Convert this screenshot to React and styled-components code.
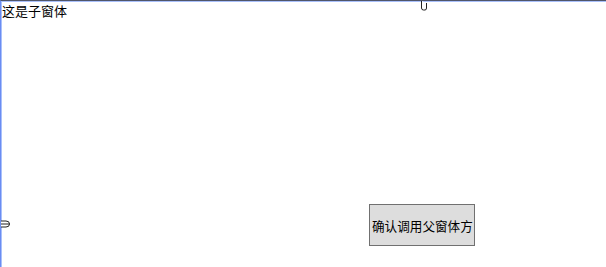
import React from "react";
import styled, { createGlobalStyle } from "styled-components";

const GlobalStyle = createGlobalStyle`
	html, body {
		margin: 0;
		padding: 0;
		background: #ffffff;
	}
	body {
		font-family: "Noto Sans CJK SC", "Liberation Sans", sans-serif;
		font-size: 13px;
		color: #000;
	}
`;

const Frame = styled.div`
	position: relative;
	box-sizing: border-box;
	width: 606px;
	height: 267px;
	border-top: 1px solid #50566a;
	border-left: 1px solid #6a8cf2;
	box-shadow: inset 1px 1px 0 #a9c0fb;
	display: flex;
	flex-direction: column;
	padding: 0 0 0 1px;
	overflow: hidden;
`;

const Title = styled.div`
	font-size: 13px;
	line-height: 19px;
	white-space: nowrap;
`;

const ButtonRow = styled.div`
	display: flex;
	padding-left: 367px;
	margin-top: 184px;
`;

const CallButton = styled.button`
	box-sizing: border-box;
	width: 106px;
	height: 42px;
	padding: 0 0 0 2px;
	background: #dddddd;
	border: 1px solid #707070;
	border-radius: 0;
	font-family: "Noto Sans CJK SC", "Liberation Sans", sans-serif;
	font-size: 12.6px;
	color: #000;
	white-space: nowrap;
	text-align: left;
`;

const Cursor = styled.svg`
	position: absolute;
	left: ${(p) => p.x}px;
	top: ${(p) => p.y}px;
	pointer-events: none;
`;

export default function App() {
	return (
		<>
			<GlobalStyle />
			<Frame>
				<Title>这是子窗体</Title>
				<ButtonRow>
					<CallButton>确认调用父窗体方</CallButton>
				</ButtonRow>
				<Cursor x={419} y={0} width="8" height="10" viewBox="0 0 8 10">
					<path d="M1.5 0 V7 Q1.5 9 3.5 9 H5 Q6.5 9 6.5 7 V2" fill="#fff" stroke="#222" strokeWidth="1" />
				</Cursor>
				<Cursor x={0} y={218} width="10" height="10" viewBox="0 0 10 10">
					<path d="M0 2 H5 Q8.5 2 8.5 5 Q8.5 8 5 8 H0 M0 5 H8.5" fill="#fff" stroke="#222" strokeWidth="1" />
				</Cursor>
			</Frame>
		</>
	);
}
